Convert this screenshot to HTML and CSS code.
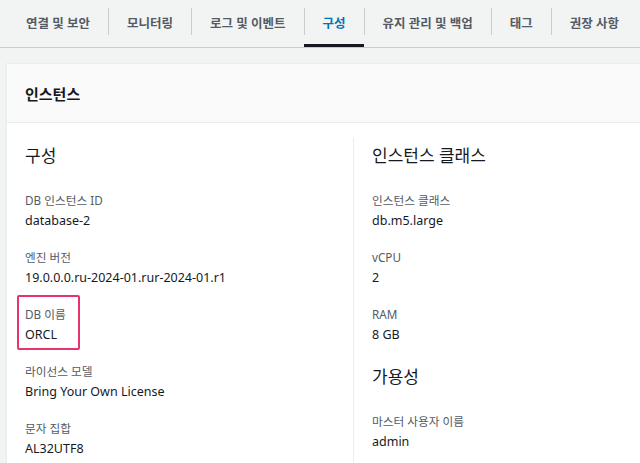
FILE: index.html
```html
<!DOCTYPE html>
<html lang="ko">
<head>
  <meta charset="UTF-8">
  <title>database-2 구성</title>
  <link rel="stylesheet" href="styles.css">
</head>
<body>
  <!-- Tabs -->
  <div class="tabs">
    <div class="tab">연결 및 보안</div>
    <div class="tab">모니터링</div>
    <div class="tab">로그 및 이벤트</div>
    <div class="tab active">구성</div>
    <div class="tab">유지 관리 및 백업</div>
    <div class="tab">태그</div>
    <div class="tab">권장 사항</div>
  </div>

  <div class="panel">
    <div class="panel-header">
      <h2>인스턴스</h2>
    </div>
    <div class="panel-body">
      <div class="column">
        <h3>구성</h3>
        <div class="field">
          <div class="label">DB 인스턴스 ID</div>
          <div class="value">database-2</div>
        </div>
        <div class="field">
          <div class="label">엔진 버전</div>
          <div class="value">19.0.0.0.ru-2024-01.rur-2024-01.r1</div>
        </div>
        <div class="field marked">
          <div class="label">DB 이름</div>
          <div class="value">ORCL</div>
        </div>
        <div class="field">
          <div class="label">라이선스 모델</div>
          <div class="value">Bring Your Own License</div>
        </div>
        <div class="field">
          <div class="label">문자 집합</div>
          <div class="value">AL32UTF8</div>
        </div>
      </div>
      <div class="column">
        <h3>인스턴스 클래스</h3>
        <div class="field">
          <div class="label">인스턴스 클래스</div>
          <div class="value">db.m5.large</div>
        </div>
        <div class="field">
          <div class="label">vCPU</div>
          <div class="value">2</div>
        </div>
        <div class="field">
          <div class="label">RAM</div>
          <div class="value">8 GB</div>
        </div>
        <h3 class="sub">가용성</h3>
        <div class="field">
          <div class="label">마스터 사용자 이름</div>
          <div class="value">admin</div>
        </div>
      </div>
    </div>
  </div>
</body>
</html>
```

FILE: styles.css
```css
body {
  margin: 0;
  background-color: #f2f3f3;
  font-family: "Noto Sans", "Noto Sans CJK KR", sans-serif;
  color: #16191f;
  overflow: hidden;
}
.tabs {
  display: flex;
  height: 47px;
  border-bottom: 1px solid #c6cdcd;
  padding-left: 7px;
}
.tab {
  position: relative;
  display: flex;
  align-items: center;
  height: 44px;
  padding: 0 18px 0 19px;
  font-size: 12.5px;
  font-weight: bold;
  color: #545b64;
}
.tab + .tab::before {
  content: "";
  position: absolute;
  left: 0;
  top: 8px;
  height: 27px;
  border-left: 1px solid #c6cdcd;
}
.tab.active {
  color: #0073bb;
  border-bottom: 3px solid #16191f;
}
.panel {
  margin: 15px 0 0 6px;
  width: 634px;
  background: #fff;
  border: 1px solid #eaeded;
  border-right: none;
  box-shadow: 0 1px 1px rgba(0, 28, 36, 0.1);
}
.panel-header {
  height: 58px;
  display: flex;
  align-items: center;
  padding-left: 18px;
  background: #fafafa;
  border-bottom: 1px solid #eaeded;
}
.panel-header h2 {
  margin: 0;
  font-size: 15px;
  font-weight: bold;
}
.panel-body {
  display: flex;
  padding-top: 15px;
}
.column {
  padding: 4px 18px 0;
}
.column:first-child {
  width: 310px;
}
.column + .column {
  flex: 1;
  border-left: 1px solid #eaeded;
}
h3 {
  margin: 0 0 20px;
  font-size: 17px;
  font-weight: normal;
  line-height: 28px;
}
h3.sub {
  margin-top: 17px;
}
.field {
  margin-bottom: 15px;
}
.label {
  font-size: 11.7px;
  line-height: 20px;
  color: #545b64;
}
.value {
  font-size: 12.5px;
  line-height: 22px;
}
.field.marked {
  width: 63px;
  box-sizing: border-box;
  margin: -9px 0 11px -8px;
  padding: 7px 0 2px 6px;
  border: 2px solid #e7336e;
  border-radius: 2px;
}
```
